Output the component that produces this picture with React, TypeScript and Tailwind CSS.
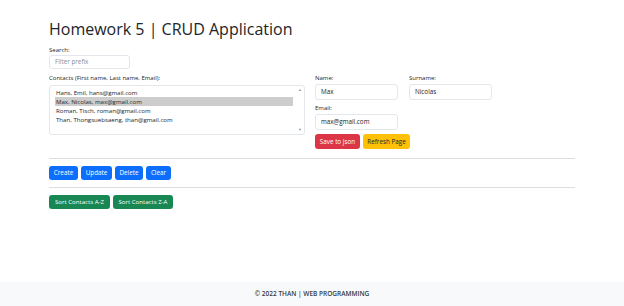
const contacts = [
  "Hans, Emil, hans@gmail.com",
  "Max, Nicolas, max@gmail.com",
  "Roman, Tisch, roman@gmail.com",
  "Than, Thongsuebsaeng, than@gmail.com",
]

function Field({ label, value, className = "" }: { label: string; value: string; className?: string }) {
  return (
    <div className={`flex w-[83px] flex-col ${className}`}>
      <label className="h-[9px] text-[6px] leading-[9px]">{label}</label>
      <div className="mt-[1px] flex h-[16px] items-center rounded-[3px] border border-[#e3e6ea] px-[5px] text-[6.3px]">
        {value}
      </div>
    </div>
  )
}

export default function App() {
  return (
    <div
      className="flex min-h-screen flex-col bg-white text-[#212529]"
      style={{ fontFamily: '"Open Sans", "Noto Sans", sans-serif' }}
    >
      <main className="w-[575px] pl-[49px]">
        <h1 className="mt-[16px] text-[16px] leading-[26px] font-medium">Homework 5 | CRUD Application</h1>

        <div className="mt-[4px] text-[6px] leading-[9px]">Search:</div>
        <div className="flex h-[14px] w-[81px] items-center rounded-[3px] border border-[#e3e6ea] px-[5px] text-[6.3px] text-[#8a8f95]">
          Filter prefix
        </div>

        {/* Contacts + form */}
        <div className="mt-[5px] flex">
          <div className="flex w-[256px] flex-col">
            <label className="h-[9px] text-[6px] leading-[9px]">Contacts (First name, Last name, Email):</label>
            <div className="relative mt-[2px] h-[50px] rounded-[3px] border border-[#e3e6ea] pt-[2px] pr-[11px] pl-[5px]">
              {contacts.map((c, i) => (
                <div
                  key={c}
                  className={`h-[9px] pl-[1px] text-[6.1px] leading-[9px] ${i === 1 ? "bg-[#cdcdcd]" : ""}`}
                >
                  {c}
                </div>
              ))}
              <div className="absolute top-[2px] right-[2px] text-[4px] leading-none text-[#9a9a9a]">▲</div>
              <div className="absolute right-[2px] bottom-[2px] text-[4px] leading-none text-[#9a9a9a]">▼</div>
            </div>
          </div>

          <div className="ml-[10px] flex flex-col">
            <div className="flex gap-[11px]">
              <Field label="Name:" value="Max" />
              <Field label="Surname:" value="Nicolas" />
            </div>
            <Field label="Email:" value="max@gmail.com" className="mt-[4px]" />
            <div className="mt-[4px] flex gap-[3px]">
              <button className="h-[15px] w-[45px] rounded-[3px] bg-[#dc3545] text-[6.3px] text-white">Save to Json</button>
              <button className="h-[15px] w-[47px] rounded-[3px] bg-[#ffc107] text-[6.3px] text-[#212529]">Refresh Page</button>
            </div>
          </div>
        </div>

        <hr className="mt-[9px] border-t border-[#dedede]" />

        <div className="mt-[7px] flex gap-[3px]">
          <button className="h-[14px] w-[29px] rounded-[3px] bg-[#0d6efd] text-[6.3px] text-white">Create</button>
          <button className="h-[14px] w-[31px] rounded-[3px] bg-[#0d6efd] text-[6.3px] text-white">Update</button>
          <button className="h-[14px] w-[28px] rounded-[3px] bg-[#0d6efd] text-[6.3px] text-white">Delete</button>
          <button className="h-[14px] w-[25px] rounded-[3px] bg-[#0d6efd] text-[6.3px] text-white">Clear</button>
        </div>

        <hr className="mt-[7px] border-t border-[#dedede]" />

        <div className="mt-[7px] flex gap-[3px]">
          <button className="h-[14px] w-[61px] rounded-[3px] bg-[#198754] text-[6.1px] text-white">Sort Contacts A-Z</button>
          <button className="h-[14px] w-[60px] rounded-[3px] bg-[#198754] text-[6.1px] text-white">Sort Contacts Z-A</button>
        </div>
      </main>

      <footer className="mt-auto flex h-[24px] items-center justify-center bg-[#f8f9fa] text-[6.5px] font-semibold text-[#343a40]">
        © 2022 THAN | WEB PROGRAMMING
      </footer>
    </div>
  )
}
